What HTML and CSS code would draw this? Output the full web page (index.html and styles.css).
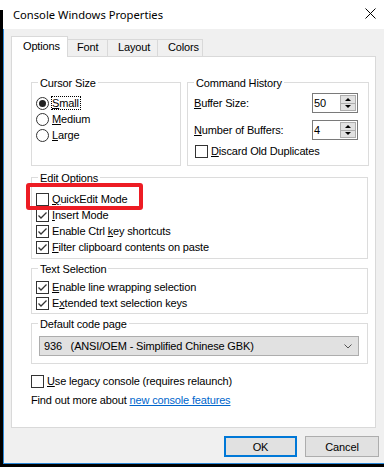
FILE: index.html
```html
<!DOCTYPE html>
<html>
<head>
<meta charset="utf-8">
<link rel="stylesheet" href="styles.css">
</head>
<body>
<div class="screen">
  <div class="edge"></div>
  <div class="window">
    <div class="titlebar">
      <span class="title">Console Windows Properties</span>
      <svg class="close" width="11" height="11" viewBox="0 0 11 11"><path d="M0.5 0.5 L10.5 10.5 M10.5 0.5 L0.5 10.5" stroke="#000" stroke-width="1" fill="none"/></svg>
    </div>
    <div class="client">
      <div class="tabs">
        <div class="tab sel t1">Options</div>
        <div class="tab t2">Font</div>
        <div class="tab t3">Layout</div>
        <div class="tab t4">Colors</div>
      </div>
      <div class="panel">
        <div class="row1">
          <div class="grp cursor">
            <div class="gt"><span>Cursor Size</span></div>
            <div class="gb cbody">
              <div class="opt"><span class="radio on"></span><span class="focus"><u>S</u>mall</span></div>
              <div class="opt"><span class="radio"></span><span><u>M</u>edium</span></div>
              <div class="opt"><span class="radio"></span><span><u>L</u>arge</span></div>
            </div>
          </div>
          <div class="grp hist">
            <div class="gt"><span>Command History</span></div>
            <div class="gb hbody">
              <div class="srow"><span><u>B</u>uffer Size:</span>
                <div class="spin"><span class="val">50</span><span class="arrows"><span class="ab"><i class="up"></i></span><span class="ab"><i class="dn"></i></span></span></div>
              </div>
              <div class="srow"><span><u>N</u>umber of Buffers:</span>
                <div class="spin"><span class="val">4</span><span class="arrows"><span class="ab"><i class="up"></i></span><span class="ab"><i class="dn"></i></span></span></div>
              </div>
              <div class="opt disc"><span class="cb"></span><span><u>D</u>iscard Old Duplicates</span></div>
            </div>
          </div>
        </div>
        <div class="grp edit">
          <div class="gt"><span>Edit Options</span></div>
          <div class="gb ebody">
            <div class="opt"><span class="cb"></span><span><u>Q</u>uickEdit Mode</span></div>
            <div class="opt"><span class="cb"><svg width="11" height="11" viewBox="0 0 11 11"><path d="M1.5 5.5 L4 8 L9.5 2.5" stroke="#333" stroke-width="1.3" fill="none"/></svg></span><span><u>I</u>nsert Mode</span></div>
            <div class="opt"><span class="cb"><svg width="11" height="11" viewBox="0 0 11 11"><path d="M1.5 5.5 L4 8 L9.5 2.5" stroke="#333" stroke-width="1.3" fill="none"/></svg></span><span>Enable Ctrl <u>k</u>ey shortcuts</span></div>
            <div class="opt"><span class="cb"><svg width="11" height="11" viewBox="0 0 11 11"><path d="M1.5 5.5 L4 8 L9.5 2.5" stroke="#333" stroke-width="1.3" fill="none"/></svg></span><span><u>F</u>ilter clipboard contents on paste</span></div>
            <div class="hl"></div>
          </div>
        </div>
        <div class="grp tsel">
          <div class="gt"><span>Text Selection</span></div>
          <div class="gb tbody">
            <div class="opt"><span class="cb"><svg width="11" height="11" viewBox="0 0 11 11"><path d="M1.5 5.5 L4 8 L9.5 2.5" stroke="#333" stroke-width="1.3" fill="none"/></svg></span><span><u>E</u>nable line wrapping selection</span></div>
            <div class="opt"><span class="cb"><svg width="11" height="11" viewBox="0 0 11 11"><path d="M1.5 5.5 L4 8 L9.5 2.5" stroke="#333" stroke-width="1.3" fill="none"/></svg></span><span>E<u>x</u>tended text selection keys</span></div>
          </div>
        </div>
        <div class="grp code">
          <div class="gt"><span>Default code page</span></div>
          <div class="gb pbody">
            <div class="select"><span>936   (ANSI/OEM - Simplified Chinese GBK)</span>
              <svg class="chev" width="8" height="5" viewBox="0 0 8 5"><path d="M0.5 0.5 L4 4 L7.5 0.5" stroke="#555" stroke-width="1" fill="none"/></svg>
            </div>
          </div>
        </div>
        <div class="opt legacy"><span class="cb"></span><span><u>U</u>se legacy console (requires relaunch)</span></div>
        <div class="more">Find out more about <span class="link">new console features</span></div>
      </div>
      <div class="buttons">
        <div class="btn ok">OK</div>
        <div class="btn cancel">Cancel</div>
      </div>
    </div>
  </div>
</div>
</body>
</html>
```
FILE: styles.css
```css
* { box-sizing: border-box; }
html, body { margin: 0; padding: 0; }
body {
  background: #000;
  width: 384px;
  height: 467px;
  overflow: hidden;
  font-family: "Liberation Sans", Arial, sans-serif;
  font-size: 11px;
  letter-spacing: -0.15px;
  color: #000;
}
u { text-decoration: underline; text-underline-offset: 1px; }
.screen { display: flex; height: 467px; }
.edge { width: 3px; flex: none; background: linear-gradient(#fff 0 10px, #000 10px); }
.window {
  width: 381px;
  flex: none;
  height: 464px;
  display: flex;
  flex-direction: column;
  background: #f0f0f0;
}
.titlebar {
  height: 29px;
  flex: none;
  background: #fff;
  display: flex;
  align-items: center;
  padding-left: 10px;
}
.title { font-family: "Noto Sans", "Liberation Sans", sans-serif; font-size: 11.2px; letter-spacing: 0; }
.close { margin-left: auto; margin-right: 8px; align-self: flex-start; margin-top: 8px; }
.client {
  flex: 1;
  border-left: 1px solid #2b88d8;
  border-bottom: 1px solid #2b88d8;
  padding: 7px 0 0 7px;
}
.tabs { display: flex; align-items: flex-end; height: 20px; position: relative; z-index: 1; }
.tab {
  height: 17px;
  border-top: 1px solid #d9d9d9;
  border-right: 1px solid #d9d9d9;
  line-height: 15px;
  background: #f0f0f0;
}
.tab.sel { height: 21px; margin-bottom: -1px; border-left: 1px solid #d9d9d9; background: #fff; line-height: 18px; }
.t1 { width: 57px; padding-left: 11px; }
.t2 { width: 40px; padding-left: 9px; }
.t3 { width: 50px; padding-left: 10px; }
.t4 { width: 45px; padding-left: 10px; }
.panel {
  width: 365px;
  height: 372px;
  border: 1px solid #d9d9d9;
  background: #fff;
  padding: 20px 0 0 19px;
}
.grp { width: 337px; }
.gt { display: flex; height: 13px; line-height: 13px; }
.gt::before {
  content: ""; flex: none; width: 6px; height: 7px; align-self: flex-end;
  border-top: 1px solid #dcdcdc; border-left: 1px solid #dcdcdc;
}
.gt span { padding: 0 2px; white-space: nowrap; }
.gt::after {
  content: ""; flex: 1; height: 7px; align-self: flex-end;
  border-top: 1px solid #dcdcdc; border-right: 1px solid #dcdcdc;
}
.gb { border: 1px solid #dcdcdc; border-top: none; }
.row1 { display: flex; gap: 6px; }
.cursor { width: 150px; }
.hist { width: 182px; }
.cursor .gb, .hist .gb { height: 76px; }
.opt { display: flex; align-items: center; height: 16px; gap: 3px; }
.cbody { padding: 5px 0 0 4px; }
.radio {
  width: 13px; height: 13px; flex: none;
  border: 1px solid #333; border-radius: 50%;
  background: #fff;
  display: flex; align-items: center; justify-content: center;
}
.radio.on::after { content: ""; width: 7px; height: 7px; border-radius: 50%; background: #222; }
.focus { border: 1px dotted #000; margin-left: -1px; line-height: 12px; padding-right: 1px; }
.hbody { padding: 3px 10px 0 6px; }
.srow { display: flex; align-items: center; justify-content: space-between; height: 20px; }
.srow + .srow { margin-top: 7px; }
.spin { width: 46px; height: 20px; border: 1px solid #7a7a7a; background: #fff; display: flex; }
.val { flex: 1; padding-left: 1px; line-height: 18px; }
.arrows { width: 17px; display: flex; flex-direction: column; padding: 1px 1px 1px 0; }
.ab {
  flex: 1; background: #e1e1e1; border: 1px solid #adadad;
  display: flex; align-items: center; justify-content: center;
}
.ab + .ab { border-top: none; }
.up { width: 0; height: 0; border-left: 3px solid transparent; border-right: 3px solid transparent; border-bottom: 3px solid #000; }
.dn { width: 0; height: 0; border-left: 3px solid transparent; border-right: 3px solid transparent; border-top: 3px solid #000; }
.disc { margin-top: 3px; margin-left: 1px; }
.cb {
  width: 13px; height: 13px; flex: none;
  border: 1px solid #333; background: #fff;
  display: flex;
}
.edit { margin-top: 6px; }
.ebody { padding: 6px 0 3px 4px; position: relative; }
.hl {
  position: absolute;
  left: -6px; top: -2px;
  width: 117px; height: 27px;
  border: 4px solid #ed1c24;
  border-radius: 3px;
}
.tsel { margin-top: 4px; }
.tbody { padding: 3px 0 2px 4px; }
.code { margin-top: 4px; }
.pbody { padding: 5px 8px 7px 7px; }
.select {
  height: 20px;
  border: 1px solid #adadad;
  background: #e1e1e1;
  display: flex; align-items: center;
  padding: 0 6px 0 4px;
  white-space: pre;
}
.chev { margin-left: auto; }
.legacy { margin-top: 9px; }
.more { margin-top: 3px; height: 16px; line-height: 16px; }
.link { color: #0066cc; text-decoration: underline; }
.buttons { display: flex; gap: 8px; margin-top: 8px; padding-left: 213px; }
.btn {
  width: 73px; height: 21px;
  background: #e1e1e1; border: 1px solid #adadad;
  display: flex; align-items: center; justify-content: center;
}
.ok { border: 2px solid #0078d7; }
.cancel { width: 74px; }
```
